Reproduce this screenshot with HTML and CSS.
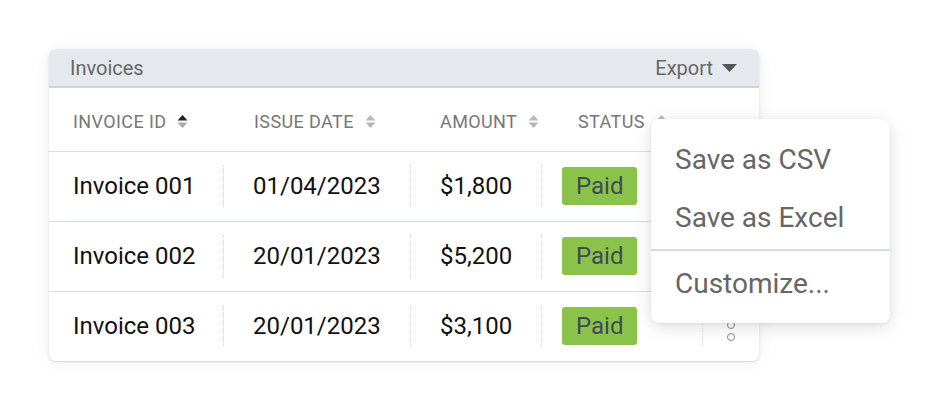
FILE: index.html
```html
<!DOCTYPE html>
<html>
<head>
<meta charset="utf-8">
<link rel="stylesheet" href="styles.css">
</head>
<body>
<div class="stage">
  <div class="card">
    <div class="card-head">
      <span class="title">Invoices</span>
      <span class="export">Export <svg class="caret" width="15" height="8" viewBox="0 0 15 8"><path d="M0 0h15L7.5 8z" fill="#555"/></svg></span>
    </div>
    <div class="grid head-row">
      <div class="hcell c1">INVOICE ID <svg class="sort" width="11" height="15" viewBox="0 0 11 15"><path d="M0.5 6.5L5.5 1l5 5.5z" fill="#222"/><path d="M0.5 8.5L5.5 14l5-5.5z" fill="#aaa"/></svg></div>
      <div class="hcell c2">ISSUE DATE <svg class="sort" width="11" height="15" viewBox="0 0 11 15"><path d="M0.5 6.5L5.5 1l5 5.5z" fill="#b8b8b8"/><path d="M0.5 8.5L5.5 14l5-5.5z" fill="#b8b8b8"/></svg></div>
      <div class="hcell c3">AMOUNT <svg class="sort" width="11" height="15" viewBox="0 0 11 15"><path d="M0.5 6.5L5.5 1l5 5.5z" fill="#b8b8b8"/><path d="M0.5 8.5L5.5 14l5-5.5z" fill="#b8b8b8"/></svg></div>
      <div class="hcell c4">STATUS <svg class="sort" width="11" height="15" viewBox="0 0 11 15"><path d="M0.5 6.5L5.5 1l5 5.5z" fill="#b8b8b8"/><path d="M0.5 8.5L5.5 14l5-5.5z" fill="#b8b8b8"/></svg></div>
      <div class="hcell c5"></div>
    </div>
    <div class="grid row">
      <div class="cell c1">Invoice 001</div>
      <div class="cell c2 sep">01/04/2023</div>
      <div class="cell c3 sep">$1,800</div>
      <div class="cell c4 sep"><span class="badge">Paid</span></div>
      <div class="cell c5 sep"><span class="dots"><i></i><i></i><i></i></span></div>
    </div>
    <div class="grid row">
      <div class="cell c1">Invoice 002</div>
      <div class="cell c2 sep">20/01/2023</div>
      <div class="cell c3 sep">$5,200</div>
      <div class="cell c4 sep"><span class="badge">Paid</span></div>
      <div class="cell c5 sep"><span class="dots"><i></i><i></i><i></i></span></div>
    </div>
    <div class="grid row last">
      <div class="cell c1">Invoice 003</div>
      <div class="cell c2 sep">20/01/2023</div>
      <div class="cell c3 sep">$3,100</div>
      <div class="cell c4 sep"><span class="badge">Paid</span></div>
      <div class="cell c5 sep"><span class="dots"><i></i><i></i><i></i></span></div>
    </div>
  </div>
  <div class="menu">
    <div class="item">Save as CSV</div>
    <div class="item">Save as Excel</div>
    <div class="divider"></div>
    <div class="item">Customize...</div>
  </div>
</div>
</body>
</html>
```
FILE: styles.css
```css
html, body {
  margin: 0;
  padding: 0;
  background: #ffffff;
}
body {
  font-family: Roboto, "Liberation Sans", sans-serif;
}
.stage {
  position: relative;
  width: 940px;
  height: 411px;
  padding: 49px 0 0 49px;
  box-sizing: border-box;
}
.card {
  width: 710px;
  background: #fff;
  border-radius: 7px;
  box-shadow: 0 2px 16px rgba(0, 0, 0, 0.08), 0 1px 2px rgba(120, 140, 160, 0.25);
  overflow: hidden;
}
.card-head {
  height: 37px;
  background: #e5e9ed;
  border-bottom: 2px solid #cad6df;
  display: flex;
  align-items: center;
  justify-content: space-between;
  padding: 0 22px 0 21px;
  font-size: 20px;
  color: #666;
}
.export {
  display: flex;
  align-items: center;
  gap: 9px;
}
.grid {
  display: grid;
  grid-template-columns: 174px 187px 131px 161px 57px;
}
.head-row {
  border-bottom: 1px solid #d3dee6;
  align-items: center;
  padding-top: 3px;
  box-sizing: border-box;
  height: 64px;
}
.hcell {
  font-size: 18px;
  color: #777;
  letter-spacing: 0.4px;
  display: flex;
  align-items: center;
  gap: 11px;
}
.hcell.c1 { padding-left: 24px; }
.hcell.c2 { padding-left: 31px; }
.hcell.c3 { padding-left: 30px; }
.hcell.c4 { padding-left: 37px; }
.row {
  height: 70px;
  border-bottom: 1px solid #d3dee6;
  box-sizing: border-box;
  padding-bottom: 1px;
}
.row.last {
  height: 69px;
  border-bottom: none;
}
.cell {
  font-size: 24px;
  color: #111;
  display: flex;
  align-items: center;
  position: relative;
}
.cell.c1 { padding-left: 24px; }
.cell.c2 { padding-left: 30px; }
.cell.c3 { padding-left: 30px; }
.cell.c4 { padding-left: 21px; }
.cell.c5 { justify-content: center; padding-left: 0; }
.sep::before {
  content: "";
  position: absolute;
  left: 0;
  top: 13px;
  bottom: 13px;
  border-left: 1px dotted #d8d8d8;
}
.badge {
  background: #8bc34a;
  color: #3f4a55;
  border-radius: 3px;
  padding: 0 14px;
  height: 38px;
  display: inline-flex;
  align-items: center;
  font-size: 24px;
}
.dots {
  display: flex;
  flex-direction: column;
  gap: 4px;
  margin-top: -2px;
}
.dots i {
  display: block;
  width: 6px;
  height: 6px;
  border: 1.5px solid #888;
  border-radius: 50%;
  box-sizing: content-box;
}
.menu {
  position: absolute;
  left: 651px;
  top: 119px;
  width: 239px;
  background: #fff;
  border-radius: 8px;
  box-shadow: 0 4px 18px rgba(0, 0, 0, 0.13), 0 1px 3px rgba(0, 0, 0, 0.06);
  padding: 11px 0;
  box-sizing: border-box;
}
.item {
  height: 58px;
  display: flex;
  align-items: center;
  padding-left: 24px;
  font-size: 28px;
  color: #666;
}
.divider {
  height: 2px;
  background: #d2dce4;
  margin: 3px 0;
}
```
